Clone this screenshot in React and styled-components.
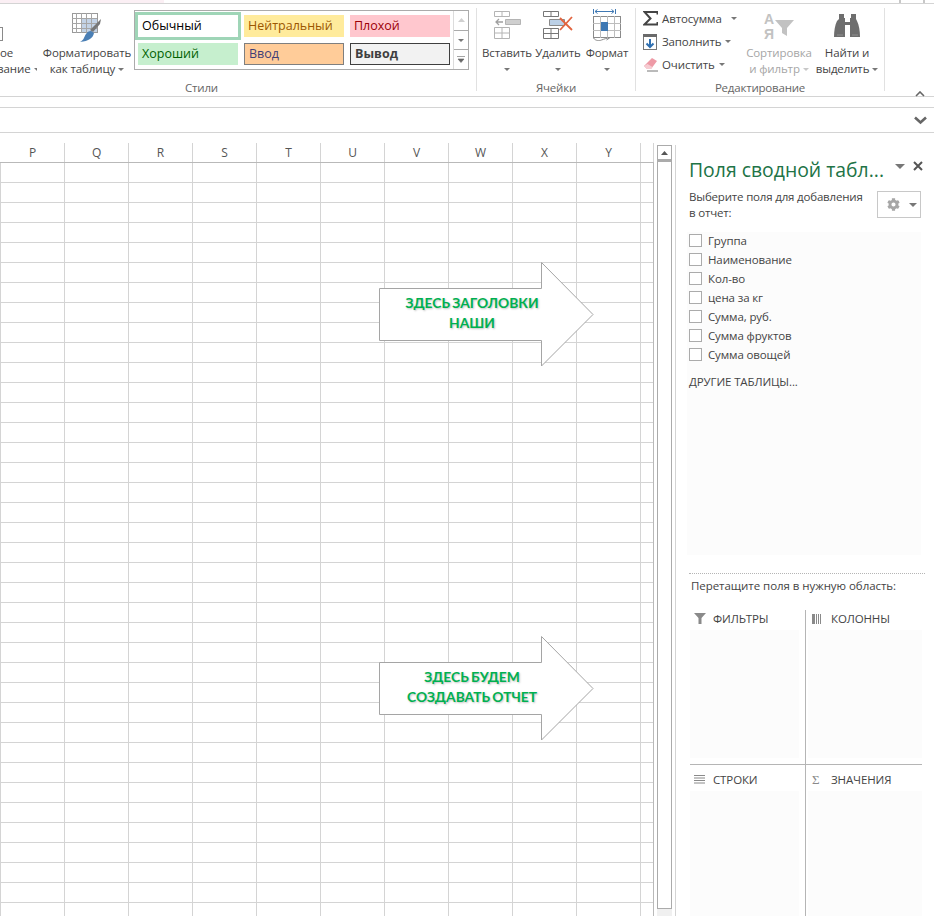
import styled, { createGlobalStyle } from "styled-components";
import { FaCog } from "react-icons/fa";

const GlobalStyle = createGlobalStyle`
  body {
    margin: 0;
    background: #fff;
    font-family: "Open Sans", "Noto Sans", sans-serif;
    font-size: 11.5px;
    letter-spacing: -0.12px;
    color: #444;
  }
`;

const Page = styled.div`
  width: 934px;
  height: 916px;
  overflow: hidden;
  display: flex;
  flex-direction: column;
  background: #fff;
`;

const TopStrip = styled.div`
  height: 3px;
  border-bottom: 1px solid #d4d4d4;
  display: flex;
  justify-content: space-between;
  flex-shrink: 0;
`;
const PinkTab = styled.div`
  width: 164px;
  background: #fbeff4;
`;
const WindowNotch = styled.div`
  width: 22px;
  margin-right: 9px;
  border-left: 2px solid #c8c8c8;
  border-right: 2px solid #c8c8c8;
`;

const Ribbon = styled.div`
  height: 88px;
  padding-top: 4px;
  border-bottom: 1px solid #d4d4d4;
  display: flex;
  flex-shrink: 0;
  position: relative;
`;
const Group = styled.div`
  width: ${(p) => p.$width}px;
  height: 83px;
  box-sizing: border-box;
  border-right: 1px solid #e1e1e1;
  flex-shrink: 0;
`;
const GroupBody = styled.div`
  height: 72px;
  display: flex;
`;
const GroupLabel = styled.div`
  height: 16px;
  line-height: 16px;
  text-align: center;
  color: #666;
  letter-spacing: -0.2px;
  padding-right: ${(p) => p.$shift || 0}px;
`;

const BigButton = styled.div`
  width: ${(p) => p.$width}px;
  flex-shrink: 0;
  display: flex;
  flex-direction: column;
  align-items: center;
  color: ${(p) => (p.$disabled ? "#a6a6a6" : "#444")};
`;
const IconSlot = styled.div`
  height: 37px;
  display: flex;
  align-items: flex-end;
  padding-bottom: ${(p) => p.$lift || 0}px;
  box-sizing: border-box;
`;
const ButtonLine = styled.div`
  height: 16px;
  line-height: 16px;
  white-space: nowrap;
  display: flex;
  align-items: center;
  gap: 3px;
`;
const Caret = styled.span`
  display: inline-block;
  width: 0;
  height: 0;
  border-left: ${(p) => p.$size || 3}px solid transparent;
  border-right: ${(p) => p.$size || 3}px solid transparent;
  border-top: ${(p) => p.$size || 3}px solid ${(p) => (p.$disabled ? "#c8c8c8" : "#777")};
  margin-left: ${(p) => p.$gap || 0}px;
`;
const ClippedGroup = styled.div`
  width: 37px;
  margin-right: 3px;
  flex-shrink: 0;
  overflow: hidden;
  display: flex;
  justify-content: flex-end;
`;
const ClippedIcon = styled.div`
  height: 37px;
  width: 100%;
  display: flex;
  justify-content: center;
  align-items: flex-end;
  padding-bottom: 4px;
  box-sizing: border-box;
`;
const IconBox = styled.div`
  width: 30px;
  height: 12px;
  border: 1px solid #8a8a8a;
`;

const Gallery = styled.div`
  width: 335px;
  height: 60px;
  margin-top: 2px;
  border: 1px solid #ababab;
  box-sizing: border-box;
  display: flex;
  flex-shrink: 0;
`;
const GalleryGrid = styled.div`
  width: 319px;
  padding: 4px 0 0 3px;
  box-sizing: border-box;
  display: grid;
  grid-template-columns: repeat(3, 100px);
  grid-auto-rows: 22px;
  column-gap: 6px;
  row-gap: 6px;
`;
const StyleCell = styled.div`
  box-sizing: border-box;
  padding-left: 4px;
  line-height: ${(p) => (p.$border ? 20 : 22)}px;
  font-size: 12.5px;
  letter-spacing: 0;
  background: ${(p) => p.$bg};
  color: ${(p) => p.$color};
  font-weight: ${(p) => (p.$bold ? 700 : 400)};
  border: ${(p) => (p.$border ? `1px solid ${p.$border}` : "none")};
  outline: ${(p) => (p.$selected ? "3px solid #9fd5b7" : "none")};
`;
const GalleryScroll = styled.div`
  width: 14px;
  border-left: 1px solid #dcdcdc;
  display: flex;
  flex-direction: column;
`;
const GalleryStep = styled.div`
  flex: 1;
  display: flex;
  align-items: center;
  justify-content: center;
  border-bottom: 1px solid #ababab;
  &:last-child {
    border-bottom: none;
  }
`;

const SmallColumn = styled.div`
  width: 104px;
  margin-top: -1px;
  flex-shrink: 0;
  display: flex;
  flex-direction: column;
`;
const SmallRow = styled.div`
  height: 23px;
  display: flex;
  align-items: center;
  padding-left: 7px;
  white-space: nowrap;
`;
const SmallIcon = styled.div`
  width: 19px;
  flex-shrink: 0;
  display: flex;
  align-items: center;
`;
const CollapseIcon = styled.div`
  position: absolute;
  left: 915px;
  top: 81px;
`;

const FormulaBar = styled.div`
  height: 24px;
  margin-top: 10px;
  border-top: 1px solid #d4d4d4;
  border-bottom: 1px solid #d4d4d4;
  display: flex;
  align-items: center;
  justify-content: flex-end;
  padding-right: 7px;
  flex-shrink: 0;
`;

const SheetRow = styled.div`
  flex: 1;
  display: flex;
  min-height: 0;
`;
const GridArea = styled.div`
  width: 654px;
  flex-shrink: 0;
  display: flex;
  flex-direction: column;
  padding-top: 10px;
  box-sizing: border-box;
`;
const HeaderRow = styled.div`
  height: 20px;
  box-sizing: border-box;
  padding-left: 1px;
  border-bottom: 1px solid #b9b9b9;
  display: flex;
  flex-shrink: 0;
`;
const HeaderCell = styled.div`
  width: ${(p) => p.$width || 64}px;
  box-sizing: border-box;
  border-right: 1px solid #d4d4d4;
  text-align: center;
  line-height: 19px;
  font-size: 12px;
  color: #555;
  flex-shrink: 0;
`;
const Grid = styled.div`
  flex: 1;
  position: relative;
  border-right: 1px solid #b9b9b9;
  background-image: linear-gradient(to right, transparent 63px, #d4d4d4 63px),
    linear-gradient(to bottom, transparent 19px, #d4d4d4 19px);
  background-size: 64px 20px;
  background-position: 1px 0;
`;
const ArrowShape = styled.div`
  position: absolute;
  left: 379px;
  top: ${(p) => p.$top}px;
  width: 215px;
  height: 105px;
`;
const ArrowText = styled.div`
  position: absolute;
  left: 0;
  top: 31px;
  width: 186px;
  text-align: center;
  line-height: 20px;
  font-family: "Lato", "Open Sans", sans-serif;
  font-size: 13.8px;
  letter-spacing: 0;
  word-spacing: -1px;
  font-weight: 700;
  color: #00b050;
  text-shadow: 1px 1px 2px rgba(0, 0, 0, 0.25);
  white-space: nowrap;
`;

const ScrollColumn = styled.div`
  width: 21px;
  flex-shrink: 0;
  padding: 12px 3px 0;
  box-sizing: border-box;
  display: flex;
  flex-direction: column;
`;
const ScrollButton = styled.div`
  height: 15px;
  box-sizing: border-box;
  border: 1px solid #ababab;
  display: flex;
  align-items: center;
  justify-content: center;
`;
const ScrollThumb = styled.div`
  height: 749px;
  box-sizing: border-box;
  border: 1px solid #ababab;
  border-top-width: 2px;
  background: #fff;
`;
const ScrollTrack = styled.div`
  flex: 1;
  background: #f0f0f0;
`;

const Pane = styled.div`
  flex: 1;
  margin-top: 12px;
  border-left: 1px solid #d4d4d4;
  padding: 11px 13px 0 11px;
  position: relative;
  display: flex;
  flex-direction: column;
  min-width: 0;
`;
const PaneTitle = styled.div`
  height: 26px;
  line-height: 28px;
  font-size: 19.4px;
  letter-spacing: 0;
  color: #217346;
  padding-left: 2px;
  white-space: nowrap;
`;
const PaneActions = styled.div`
  position: absolute;
  left: 219px;
  top: 16px;
  display: flex;
  align-items: center;
  gap: 8px;
`;
const IntroRow = styled.div`
  margin-top: 7px;
  padding-left: 2px;
  display: flex;
  justify-content: space-between;
`;
const IntroText = styled.div`
  line-height: 16px;
  letter-spacing: -0.18px;
  color: #444;
`;
const GearButton = styled.div`
  width: 44px;
  height: 27px;
  margin-top: 2px;
  box-sizing: border-box;
  border: 1px solid #c8c8c8;
  display: flex;
  align-items: center;
  justify-content: space-between;
  padding: 0 3px 0 9px;
  color: #a6a6a6;
`;
const FieldList = styled.div`
  height: 323px;
  margin-top: 11px;
  padding-left: 2px;
  background: #fcfcfc;
  flex-shrink: 0;
`;
const FieldRow = styled.div`
  height: 19px;
  display: flex;
  align-items: center;
  gap: 6px;
  &:first-child {
    margin-top: -1px;
  }
`;
const CheckBox = styled.span`
  width: 13px;
  height: 13px;
  box-sizing: border-box;
  border: 1px solid #ababab;
  background: #fff;
  flex-shrink: 0;
`;
const MoreTables = styled.div`
  margin-top: 10px;
  line-height: 16px;
`;
const DottedLine = styled.div`
  margin: 18px -4px 0 2px;
  border-top: 1px dotted #b5b5b5;
`;
const Hint = styled.div`
  margin-top: 4px;
  padding-left: 4px;
  line-height: 16px;
  letter-spacing: -0.05px;
`;
const Areas = styled.div`
  margin: 16px 0 0 3px;
  display: grid;
  grid-template-columns: 116px 116px;
  grid-template-rows: 155px 1fr;
  flex: 1;
  min-height: 0;
`;
const AreaCell = styled.div`
  box-sizing: border-box;
  padding-top: ${(p) => (p.$bottom ? 6 : 0)}px;
  padding-left: ${(p) => (p.$right ? 2 : 0)}px;
  padding-right: ${(p) => (p.$right ? 0 : 6)}px;
  border-right: ${(p) => (p.$right ? "none" : "1px solid #b5b5b5")};
  border-bottom: ${(p) => (p.$bottom ? "none" : "1px solid #b5b5b5")};
  display: flex;
  flex-direction: column;
`;
const AreaHead = styled.div`
  height: 20px;
  padding-left: 4px;
  display: flex;
  line-height: 17px;
  flex-shrink: 0;
`;
const AreaIcon = styled.div`
  width: 19px;
  height: 17px;
  display: flex;
  align-items: center;
  flex-shrink: 0;
  color: #8a8a8a;
  font-family: "Liberation Serif", serif;
  font-size: 13px;
`;
const AreaBox = styled.div`
  height: ${(p) => (p.$fill ? "auto" : "128px")};
  flex: ${(p) => (p.$fill ? 1 : "none")};
  background: #fcfcfc;
`;

const columns = ["P", "Q", "R", "S", "T", "U", "V", "W", "X", "Y"];
const fields = ["Группа", "Наименование", "Кол-во", "цена за кг", "Сумма, руб.", "Сумма фруктов", "Сумма овощей"];

function TableBrushIcon() {
  return (
    <svg width="30" height="29" viewBox="0 0 30 29">
      <rect x="0.5" y="0.5" width="25" height="19" fill="#fff" stroke="#9a9a9a" />
      <rect x="9" y="5" width="16" height="14" fill="#c3d3e6" />
      <path d="M0 5.5h25M0 10.5h25M0 15.5h25M4.5 0v20M9.5 0v20M14.5 0v20M19.5 0v20" stroke="#a6a6a6" fill="none" />
      <path d="M29 6l-1 5-7 8-3-2z" fill="#777" />
      <path d="M19 18l3 2c-1 5-5 8-14 9 4-2 4-5 6-8 1-2 3-3 5-3z" fill="#4a7fb5" />
    </svg>
  );
}

function InsertIcon() {
  return (
    <svg width="27" height="28" viewBox="0 0 27 28">
      <g fill="none" stroke="#b4b4b4">
        <path d="M0.5 0.5h15v5h-15zM8 0.5v5" />
        <path d="M0.5 16.5h15v11h-15zM8 16.5v11M0.5 22h15" />
      </g>
      <path d="M11.5 8.5h15v5h-15z" fill="#cfcfcf" stroke="#b4b4b4" />
      <path d="M9 11H2M5 8l-3 3 3 3" fill="none" stroke="#a0a0a0" strokeWidth="1.3" />
    </svg>
  );
}

function DeleteIcon() {
  return (
    <svg width="31" height="28" viewBox="0 0 31 28">
      <g fill="none" stroke="#777">
        <path d="M0.5 0.5h15v5h-15zM8 0.5v5" />
        <path d="M0.5 17.5h15v10h-15zM8 17.5v10M0.5 22.5h15" />
      </g>
      <path d="M6.5 8.5h15v6h-15z" fill="#bcd0e6" stroke="#8a8a8a" />
      <path d="M17 7l12 12M29 6L17 19" stroke="#e2643f" strokeWidth="1.8" fill="none" />
    </svg>
  );
}

function FormatIcon() {
  return (
    <svg width="29" height="32" viewBox="0 0 29 32">
      <path d="M0.5 0v5M22.5 0v5M2 2.5h19" stroke="#3f78b3" fill="none" />
      <path d="M2 2.5l2.5-2M2 2.5l2.5 2M21 2.5l-2.5-2M21 2.5l-2.5 2" stroke="#3f78b3" fill="none" />
      <rect x="0.5" y="7.5" width="27" height="21" fill="#fff" stroke="#8a8a8a" />
      <path d="M0 14.5h28M0 21.5h28M7.5 7v22M14.5 7v22M21.5 7v22" stroke="#bdbdbd" />
      <rect x="8" y="13" width="7" height="9" fill="#3f78b3" />
      <path d="M0.5 29c2 3 6 3 8 2 3-1 5-2 8-2l-3 2" stroke="#8a8a8a" fill="none" />
    </svg>
  );
}

function SigmaIcon() {
  return (
    <svg width="15" height="15" viewBox="0 0 15 15">
      <path d="M14.5 3.5V1H1.5l6 6.5-6 6H14.5V11" fill="none" stroke="#444" strokeWidth="2" />
    </svg>
  );
}

function FillIcon() {
  return (
    <svg width="14" height="16" viewBox="0 0 14 16">
      <rect x="0.5" y="0.5" width="13" height="15" fill="#fff" stroke="#777" />
      <rect x="0" y="0" width="14" height="3" fill="#6a6a6a" />
      <path d="M7 5v8M3.5 9.5L7 13l3.5-3.5" fill="none" stroke="#2f6fb0" strokeWidth="2" />
    </svg>
  );
}

function EraserIcon() {
  return (
    <svg width="16" height="15" viewBox="0 0 16 15">
      <path d="M9 1l5 3-6 8H4L1 9z" fill="#ee9aa6" />
      <path d="M1 9l3 3h4l1.5-2-5-3z" fill="#f6ccd2" />
      <path d="M4 14h11" stroke="#777" />
    </svg>
  );
}

function SortIcon() {
  return (
    <svg width="31" height="28" viewBox="0 0 31 28" overflow="visible">
      <text x="0" y="12" fontFamily="Liberation Sans" fontWeight="700" fontSize="14" fill="#c2c2c2">А</text>
      <text x="0" y="27" fontFamily="Liberation Sans" fontWeight="700" fontSize="14" fill="#c2c2c2">Я</text>
      <path d="M11 8h19l-7 8v8l-5-3v-5z" fill="#c2c2c2" />
    </svg>
  );
}

function BinocularsIcon() {
  return (
    <svg width="27" height="24" viewBox="0 0 27 24">
      <path d="M5 0h5v4h1v4h5V4h1V0h5v5l1 2c2 4 3 10 3 16H16V11h-5v12H0C0 17 1 11 3 7l2-2z" fill="#6e6e6e" />
      <path d="M3 21h6M18 21h6" stroke="#8f8f8f" />
    </svg>
  );
}

function UpTriangle({ color = "#555" }) {
  return (
    <svg width="7" height="4" viewBox="0 0 7 4">
      <path d="M3.5 0L7 4H0z" fill={color} />
    </svg>
  );
}

function Arrow({ top, lines }) {
  return (
    <ArrowShape $top={top}>
      <svg width="215" height="105" viewBox="0 0 215 105">
        <polygon points="0.5,26.5 162.5,26.5 162.5,0.5 214,52.5 162.5,104 162.5,78.5 0.5,78.5" fill="#fff" stroke="#a5a5a5" />
      </svg>
      <ArrowText>
        {lines.map((line) => (
          <div key={line}>{line}</div>
        ))}
      </ArrowText>
    </ArrowShape>
  );
}

export default function App() {
  return (
    <Page>
      <GlobalStyle />
      <TopStrip>
        <PinkTab />
        <WindowNotch />
      </TopStrip>

      <Ribbon>
        <Group $width={477}>
          <GroupBody>
            <ClippedGroup>
              <BigButton $width={100}>
                <ClippedIcon>
                  <IconBox />
                </ClippedIcon>
                <ButtonLine>Условное</ButtonLine>
                <ButtonLine>форматирование <Caret /></ButtonLine>
              </BigButton>
            </ClippedGroup>
            <BigButton $width={94}>
              <IconSlot $lift={3}>
                <TableBrushIcon />
              </IconSlot>
              <ButtonLine>Форматировать</ButtonLine>
              <ButtonLine>как таблицу <Caret /></ButtonLine>
            </BigButton>
            <Gallery>
              <GalleryGrid>
                <StyleCell $bg="#fff" $color="#000" $selected>Обычный</StyleCell>
                <StyleCell $bg="#ffeb9c" $color="#9c5700">Нейтральный</StyleCell>
                <StyleCell $bg="#ffc7ce" $color="#9c0006">Плохой</StyleCell>
                <StyleCell $bg="#c6efce" $color="#006100">Хороший</StyleCell>
                <StyleCell $bg="#ffcc99" $color="#3f3f76" $border="#7f7f7f">Ввод</StyleCell>
                <StyleCell $bg="#f2f2f2" $color="#3f3f3f" $border="#3f3f3f" $bold>Вывод</StyleCell>
              </GalleryGrid>
              <GalleryScroll>
                <GalleryStep><UpTriangle color="#d0d0d0" /></GalleryStep>
                <GalleryStep><Caret /></GalleryStep>
                <GalleryStep>
                  <svg width="8" height="7" viewBox="0 0 8 7">
                    <path d="M0 0.5h8M1 3h6L4 6.5z" fill="#666" stroke="#666" strokeWidth="0.6" />
                  </svg>
                </GalleryStep>
              </GalleryScroll>
            </Gallery>
          </GroupBody>
          <GroupLabel $shift={73}>Стили</GroupLabel>
        </Group>

        <Group $width={159}>
          <GroupBody>
            <BigButton $width={60}>
              <IconSlot $lift={6}>
                <InsertIcon />
              </IconSlot>
              <ButtonLine>Вставить</ButtonLine>
              <ButtonLine><Caret /></ButtonLine>
            </BigButton>
            <BigButton $width={42}>
              <IconSlot $lift={6}>
                <DeleteIcon />
              </IconSlot>
              <ButtonLine>Удалить</ButtonLine>
              <ButtonLine><Caret /></ButtonLine>
            </BigButton>
            <BigButton $width={56}>
              <IconSlot $lift={4}>
                <FormatIcon />
              </IconSlot>
              <ButtonLine>Формат</ButtonLine>
              <ButtonLine><Caret /></ButtonLine>
            </BigButton>
          </GroupBody>
          <GroupLabel>Ячейки</GroupLabel>
        </Group>

        <Group $width={249}>
          <GroupBody>
            <SmallColumn>
              <SmallRow>
                <SmallIcon><SigmaIcon /></SmallIcon>
                Автосумма<Caret $gap={9} />
              </SmallRow>
              <SmallRow>
                <SmallIcon><FillIcon /></SmallIcon>
                Заполнить<Caret $gap={4} />
              </SmallRow>
              <SmallRow>
                <SmallIcon><EraserIcon /></SmallIcon>
                Очистить<Caret $gap={4} />
              </SmallRow>
            </SmallColumn>
            <BigButton $width={78} $disabled>
              <IconSlot $lift={5}>
                <SortIcon />
              </IconSlot>
              <ButtonLine>Сортировка</ButtonLine>
              <ButtonLine>и фильтр <Caret $disabled /></ButtonLine>
            </BigButton>
            <BigButton $width={58}>
              <IconSlot $lift={7}>
                <BinocularsIcon />
              </IconSlot>
              <ButtonLine>Найти и</ButtonLine>
              <ButtonLine>выделить <Caret /></ButtonLine>
            </BigButton>
          </GroupBody>
          <GroupLabel>Редактирование</GroupLabel>
        </Group>

        <CollapseIcon>
          <svg width="10" height="6" viewBox="0 0 10 6">
            <path d="M1 5l4-4 4 4" fill="none" stroke="#666" strokeWidth="1.6" />
          </svg>
        </CollapseIcon>
      </Ribbon>

      <FormulaBar>
        <svg width="13" height="9" viewBox="0 0 13 9">
          <path d="M1 1.5l5.5 5 5.5-5" fill="none" stroke="#666" strokeWidth="2.6" />
        </svg>
      </FormulaBar>

      <SheetRow>
        <GridArea>
          <HeaderRow>
            {columns.map((c) => (
              <HeaderCell key={c}>{c}</HeaderCell>
            ))}
            <HeaderCell $width={13} />
          </HeaderRow>
          <Grid>
            <Arrow top={99} lines={["ЗДЕСЬ ЗАГОЛОВКИ", "НАШИ"]} />
            <Arrow top={473} lines={["ЗДЕСЬ БУДЕМ", "СОЗДАВАТЬ ОТЧЕТ"]} />
          </Grid>
        </GridArea>

        <ScrollColumn>
          <ScrollButton><UpTriangle /></ScrollButton>
          <ScrollThumb />
          <ScrollTrack />
        </ScrollColumn>

        <Pane>
          <PaneTitle>Поля сводной табл...</PaneTitle>
          <PaneActions>
            <Caret $size={5} />
            <svg width="10" height="10" viewBox="0 0 10 10">
              <path d="M1 1l8 8M9 1L1 9" stroke="#555" strokeWidth="2" />
            </svg>
          </PaneActions>

          <IntroRow>
            <IntroText>
              Выберите поля для добавления
              <br />в отчет:
            </IntroText>
            <GearButton>
              <FaCog size={13} />
              <Caret $size={4} />
            </GearButton>
          </IntroRow>

          <FieldList>
            {fields.map((f) => (
              <FieldRow key={f}>
                <CheckBox />
                {f}
              </FieldRow>
            ))}
            <MoreTables>ДРУГИЕ ТАБЛИЦЫ...</MoreTables>
          </FieldList>

          <DottedLine />
          <Hint>Перетащите поля в нужную область:</Hint>

          <Areas>
            <AreaCell>
              <AreaHead>
                <AreaIcon>
                  <svg width="12" height="11" viewBox="0 0 12 11">
                    <path d="M0 0h12L7.5 5v6h-3V5z" fill="#8a8a8a" />
                  </svg>
                </AreaIcon>
                ФИЛЬТРЫ
              </AreaHead>
              <AreaBox />
            </AreaCell>
            <AreaCell $right>
              <AreaHead>
                <AreaIcon>
                  <svg width="10" height="10" viewBox="0 0 10 10">
                    <path d="M0 0h3v10H0zM4 0h1v10H4zM6 0h1v10H6zM8 0h1v10H8z" fill="#8a8a8a" />
                  </svg>
                </AreaIcon>
                КОЛОННЫ
              </AreaHead>
              <AreaBox />
            </AreaCell>
            <AreaCell $bottom>
              <AreaHead>
                <AreaIcon>
                  <svg width="11" height="9" viewBox="0 0 11 9">
                    <path d="M0 0.5h11M0 3h11M0 5.5h11M0 8h11" stroke="#8a8a8a" />
                  </svg>
                </AreaIcon>
                СТРОКИ
              </AreaHead>
              <AreaBox $fill />
            </AreaCell>
            <AreaCell $bottom $right>
              <AreaHead>
                <AreaIcon>Σ</AreaIcon>
                ЗНАЧЕНИЯ
              </AreaHead>
              <AreaBox $fill />
            </AreaCell>
          </Areas>
        </Pane>
      </SheetRow>
    </Page>
  );
}
